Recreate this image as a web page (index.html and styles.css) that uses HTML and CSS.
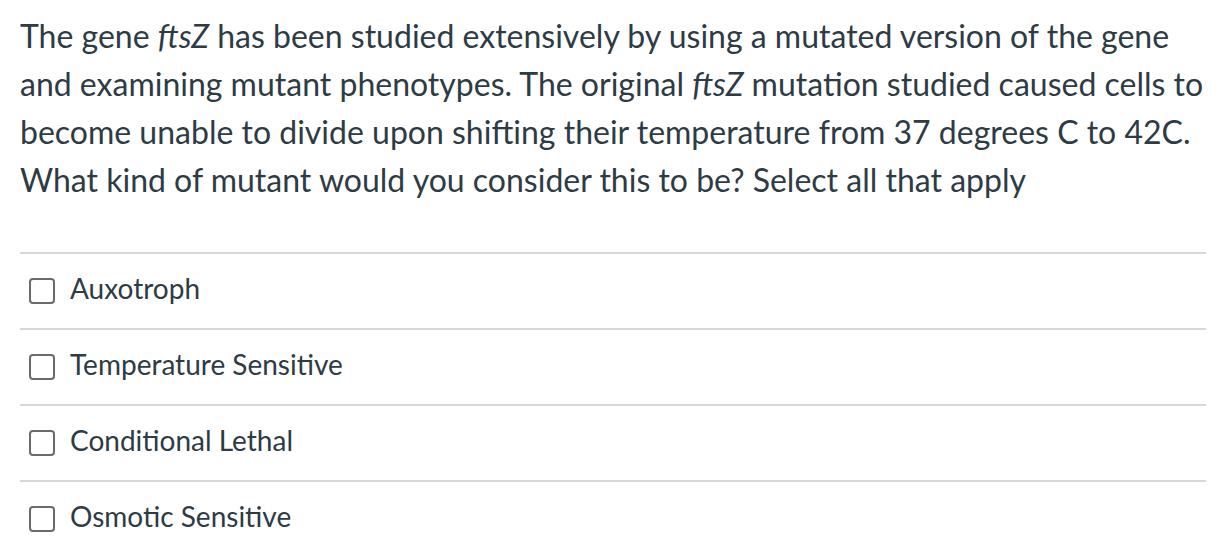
FILE: index.html
```html
<!DOCTYPE html>
<html>
<head>
<meta charset="utf-8">
<link rel="stylesheet" href="styles.css">
</head>
<body>
<div class="question">
  <p class="text">The gene <em>ftsZ</em> has been studied extensively by using a mutated version of the gene and examining mutant phenotypes. The original <em>ftsZ</em> mutation studied caused cells to become unable to divide upon shifting their temperature from 37 degrees C to 42C. What kind of mutant would you consider this to be? Select all that apply</p>
  <div class="answers">
    <label class="answer"><span class="box"></span><span class="label">Auxotroph</span></label>
    <label class="answer"><span class="box"></span><span class="label">Temperature Sensitive</span></label>
    <label class="answer"><span class="box"></span><span class="label">Conditional Lethal</span></label>
    <label class="answer"><span class="box"></span><span class="label">Osmotic Sensitive</span></label>
  </div>
</div>
</body>
</html>
```

FILE: styles.css
```css
html, body {
  margin: 0;
  padding: 0;
  background: #ffffff;
}
body {
  font-family: Lato, "Open Sans", sans-serif;
  color: #2d3b45;
}
.question {
  padding: 12px 26px 0 20px;
}
.text {
  margin: 0;
  font-size: 32px;
  line-height: 48px;
}
.text em {
  font-style: italic;
}
.answers {
  margin-top: 48px;
}
.answer {
  display: flex;
  align-items: center;
  height: 74px;
  border-top: 2px solid #d7d7d7;
}
.box {
  width: 22px;
  height: 22px;
  border: 2px solid #6b6b6b;
  border-radius: 4px;
  margin-left: 9px;
  margin-right: 15px;
  flex: none;
}
.label {
  font-size: 28px;
  line-height: 1;
  padding-bottom: 7px;
}
```
